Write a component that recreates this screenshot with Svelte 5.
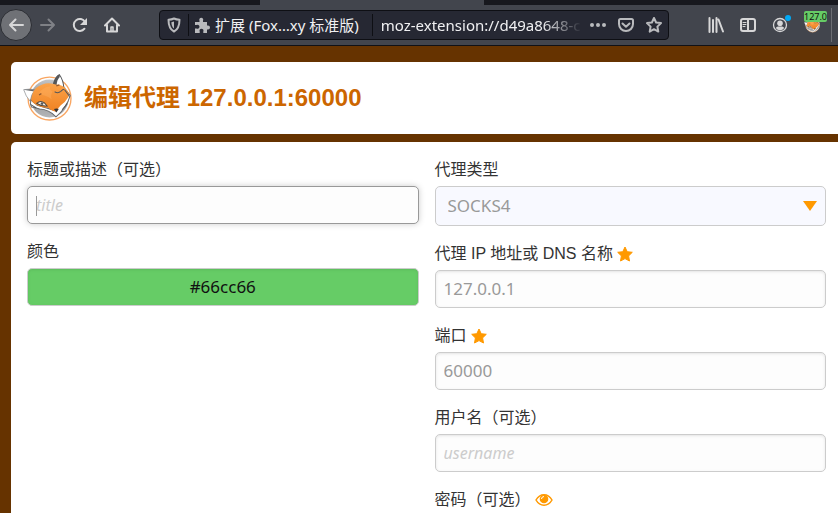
<script lang="ts">
  let title = $state('');
  let color = $state('#66cc66');
  let proxyType = $state('SOCKS4');
  let address = $state('127.0.0.1');
  let port = $state('60000');
  let username = $state('');
  let password = $state('');
  let showPassword = $state(false);
  let location = $state('moz-extension://d49a8648-c');
</script>

{#snippet fox()}
  <svg viewBox="0 0 144 141" aria-hidden="true">
    <defs>
      <linearGradient id="disc" x1="0" y1="0" x2="0" y2="1">
        <stop offset="0" stop-color="#c4c6c8" />
        <stop offset="0.45" stop-color="#929497" />
        <stop offset="1" stop-color="#b4b6b8" />
      </linearGradient>
      <linearGradient id="fur" x1="0" y1="0" x2="0" y2="1">
        <stop offset="0" stop-color="#fba34a" />
        <stop offset="1" stop-color="#f08222" />
      </linearGradient>
    </defs>
    <circle cx="78" cy="72" r="63" fill="#fff" stroke="#f9a662" stroke-width="4" />
    <circle cx="78" cy="72" r="56" fill="url(#disc)" />
    <path d="M2 46 Q20 43 35 46 Q24 60 21 80 Q8 66 2 46Z" fill="#fff" stroke="#85878a" stroke-width="2" />
    <path d="M2 46 Q20 43 35 46 L29 51 Q14 48 2 46Z" fill="#66686b" />
    <path d="M90 30 Q94 9 107 2 Q119 18 120 42Z" fill="#fff" stroke="#55575a" stroke-width="3" />
    <path d="M88 31 Q93 8 107 1 L108 9 Q99 18 99 33Z" fill="#55575a" />
    <path d="M23 76 Q20 88 25 97 Q35 98 49 103 Q76 104 97 126 Q128 100 139 63 L127 48 L96 108 L42 92Z" fill="#fff" stroke="#66686b" stroke-width="3" stroke-linejoin="round" />
    <path d="M37 42 Q57 27 76 27 Q88 28 96 31 Q117 31 128 46 Q137 55 134 67 Q124 84 111 92 Q103 99 99 111 Q82 108 75 99 Q56 101 41 91 Q29 87 24 77 Q26 55 37 42Z" fill="url(#fur)" />
    <path d="M45 60 Q57 38 80 37 Q76 46 87 52 Q79 64 85 75 Q66 60 45 60Z" fill="#ffb263" opacity="0.4" />
    <path d="M93 52 Q103 58 111 51 Q117 45 121 45" stroke="#55575a" stroke-width="3" fill="none" />
    <path d="M98 35 L107 32 M47 61 L54 58" stroke="#93592d" stroke-width="4" />
    <path d="M40 86 Q52 76 63 85 L71 94 Q55 96 40 86Z" fill="#f5f2ed" stroke="#51483e" stroke-width="3" />
    <circle cx="56" cy="87" r="4" fill="#55575a" />
    <path d="M91 103 Q99 99 105 103 L98 113Z" fill="#353536" />
    <path d="M122 46 L137 66 M23 90 L39 100 M115 105 L130 87" stroke="#55575a" stroke-width="3" />
  </svg>
{/snippet}

{#snippet star()}
  <svg class="required" viewBox="0 0 16 16" aria-hidden="true">
    <path d="M8 1 L10.2 5.7 L15.3 6.3 L11.6 9.9 L12.5 15 L8 12.6 L3.5 15 L4.4 9.9 L.7 6.3 L5.8 5.7Z" fill="#f90" stroke="#f90" stroke-linejoin="round" />
  </svg>
{/snippet}

<div class="window">
  <div class="tab-strip"><div class="active-tab"></div></div>

  <nav class="toolbar">
    <button class="tool back" aria-label="Back">
      <svg viewBox="0 0 16 16"><path d="M15 8H2 M7.5 2.5L2 8l5.5 5.5" /></svg>
    </button>
    <button class="tool" aria-label="Forward" disabled>
      <svg viewBox="0 0 16 16"><path d="M1 8h13 M8.5 2.5L14 8l-5.5 5.5" /></svg>
    </button>
    <button class="tool" aria-label="Reload">
      <svg viewBox="0 0 16 16">
        <path d="M12.5 11.7A6 6 0 1 1 13 5" />
        <path d="M15 1v7H8z" fill="currentColor" stroke="none" />
      </svg>
    </button>
    <button class="tool" aria-label="Home">
      <svg viewBox="0 0 16 16">
        <path d="M1 8.5L8 1.5l7 7 M3 8v6.5h10V8" />
        <path d="M7 14v-4h2v4" stroke-width="1.5" />
      </svg>
    </button>

    <div class="url-bar">
      <button class="url-icon" aria-label="Tracking protection">
        <svg viewBox="0 0 16 16">
          <path d="M8 1.5c2 1 4 1.2 5.5 1.2 0 5-.7 9.3-5.5 11.8C3.2 12 2.5 7.7 2.5 2.7 4 2.7 6 2.5 8 1.5Z" />
          <path d="M8 4.5v7C5.8 9.8 5.5 7.5 5.4 5.2Z" fill="currentColor" stroke="none" />
        </svg>
      </button>
      <button class="identity">
        <svg viewBox="0 0 16 16">
          <path d="M1 5h3.5V3.8A2 2 0 1 1 8 3.8V5h4v3.5h1A2 2 0 1 1 13 12.5H12V16H8.3v-1.5a2 2 0 1 0-3.6 0V16H0v-4.5h1.5a2 2 0 1 0 0-3.5H0V5z" fill="currentColor" stroke="none" />
        </svg>
        <span>扩展 (Fox…xy 标准版)</span>
      </button>
      <input class="location" aria-label="Address" bind:value={location} />
      <button class="url-icon" aria-label="Page actions">
        <svg viewBox="0 0 16 16">
          <g fill="currentColor" stroke="none">
            <circle cx="2" cy="8" r="2" /><circle cx="8" cy="8" r="2" /><circle cx="14" cy="8" r="2" />
          </g>
        </svg>
      </button>
      <button class="url-icon" aria-label="Save to Pocket">
        <svg viewBox="0 0 16 16">
          <path d="M2.5 2h11Q15 2 15 3.5V7A7 7 0 0 1 1 7V3.5Q1 2 2.5 2z M4.5 6.5L8 9.8l3.5-3.3" />
        </svg>
      </button>
      <button class="url-icon" aria-label="Bookmark">
        <svg viewBox="0 0 16 16">
          <path d="M8 1l2.1 4.5 4.9.6-3.6 3.5.9 5L8 12.2l-4.3 2.4.9-5L1 6.1l4.9-.6z" />
        </svg>
      </button>
    </div>

    <button class="tool" aria-label="Library">
      <svg viewBox="0 0 16 16"><path d="M1.5 1v14 M5 3v12 M8.5 1v14 M10.5 2.5L15 14.5" /></svg>
    </button>
    <button class="tool" aria-label="Sidebar">
      <svg viewBox="0 0 16 16">
        <rect x="1" y="2" width="14" height="12" rx="2" />
        <path d="M8 2v12" />
        <path d="M3 5.5h3 M3 7.5h3 M3 9.5h2" stroke-width="1" />
      </svg>
    </button>
    <button class="tool" aria-label="Account">
      <svg viewBox="0 0 16 16">
        <circle cx="8" cy="8" r="6.5" stroke-width="1.3" />
        <g fill="currentColor" stroke="none">
          <circle cx="8" cy="6.3" r="2.8" />
          <path d="M3.8 11Q4.5 9.5 6 9.5H10Q11.5 9.5 12.2 11A5 5 0 0 1 3.8 11z" />
        </g>
      </svg>
      <span class="dot"></span>
    </button>
    <button class="tool extension" aria-label="FoxyProxy">
      {@render fox()}
      <span class="badge">127.0</span>
    </button>
    <div class="divider"></div>
  </nav>

  <main>
    <header class="card heading">
      <div class="logo">{@render fox()}</div>
      <h1>编辑代理 127.0.0.1:60000</h1>
    </header>

    <form class="card columns">
      <div class="column">
        <div class="field">
          <label for="title">标题或描述（可选）</label>
          <div class="focused">
            <input id="title" type="text" placeholder="title" bind:value={title} />
          </div>
        </div>
        <div class="field">
          <label for="color">颜色</label>
          <input id="color" class="color" type="text" bind:value={color} style:background-color={color} />
        </div>
      </div>

      <div class="column">
        <div class="field">
          <label for="type">代理类型</label>
          <div class="select">
            <select id="type" bind:value={proxyType}>
              <option>SOCKS4</option>
            </select>
            <svg viewBox="0 0 14 10" aria-hidden="true"><path d="M0 0h14L7 10z" fill="#f90" /></svg>
          </div>
        </div>
        <div class="field">
          <label for="address">代理 IP 地址或 DNS 名称 {@render star()}</label>
          <input id="address" type="text" bind:value={address} />
        </div>
        <div class="field">
          <label for="port">端口 {@render star()}</label>
          <input id="port" type="text" bind:value={port} />
        </div>
        <div class="field">
          <label for="username">用户名（可选）</label>
          <input id="username" type="text" placeholder="username" bind:value={username} />
        </div>
        <div class="field">
          <div class="label-row">
            <label for="password">密码（可选）</label>
            <button type="button" class="eye" aria-label="Show password" onclick={() => (showPassword = !showPassword)}>
              <svg viewBox="0 0 18 14" aria-hidden="true">
                <path d="M1 7Q4 1.8 9 1.8T17 7Q14 12.2 9 12.2T1 7z" fill="none" stroke="#f90" stroke-width="1.5" />
                <circle cx="9" cy="6" r="4.3" fill="#f90" />
                <path d="M6.5 6Q6.5 3.7 9 3.5" fill="none" stroke="#fff" />
              </svg>
            </button>
          </div>
          <input id="password" type={showPassword ? 'text' : 'password'} bind:value={password} />
        </div>
      </div>
    </form>
  </main>
</div>

<style>
  :global(body) {
    margin: 0;
    background: #630;
  }

  * {
    box-sizing: border-box;
  }

  .window {
    height: 100vh;
    overflow: hidden;
    background: #630;
    color: #333;
    font-family: 'Liberation Sans', 'Noto Sans CJK SC', sans-serif;
    font-size: 16px;
  }

  button {
    padding: 0;
    border: none;
    background: none;
    color: inherit;
    font: inherit;
  }

  svg {
    display: block;
  }

  .tab-strip {
    display: flex;
    justify-content: center;
    height: 5px;
    padding-right: 94px;
    background: #17181e;
  }

  .active-tab {
    width: 224px;
    background: #42454d;
  }

  .toolbar {
    display: flex;
    align-items: center;
    height: 41px;
    padding-right: 6px;
    border-bottom: 1px solid #101116;
    background: #42454d;
    color: #d7d7d8;
    font-family: 'Noto Sans', 'Noto Sans CJK SC', sans-serif;
    font-size: 15px;
  }

  .toolbar svg {
    width: 16px;
    height: 16px;
    fill: none;
    stroke: currentColor;
    stroke-width: 2;
    stroke-linecap: round;
    stroke-linejoin: round;
  }

  .toolbar .extension svg {
    stroke: none;
  }

  .tool {
    position: relative;
    display: flex;
    flex: none;
    align-items: center;
    justify-content: center;
    width: 32px;
    height: 32px;
  }

  .tool:disabled {
    color: #7f8186;
  }

  .back {
    border: 1px solid #2b2d33;
    border-radius: 50%;
    background: #6f7176;
  }

  .url-bar {
    display: flex;
    flex: 1;
    align-items: center;
    gap: 12px;
    min-width: 0;
    height: 30px;
    margin: 0 31px;
    padding: 0 6px;
    border: 1px solid #0e0f14;
    border-radius: 4px;
    background: #262833;
  }

  .url-icon {
    color: #b9babd;
  }

  .identity {
    display: flex;
    flex: none;
    gap: 4px;
    align-items: center;
    height: 22px;
    margin-left: -6px;
    padding: 0 13px 0 6px;
    border: solid #0e0f14;
    border-width: 0 1px;
    color: #f0f0f2;
    line-height: 22px;
    white-space: nowrap;
  }

  .identity svg {
    color: #b9babd;
  }

  .location {
    flex: 1;
    min-width: 0;
    margin: 0 -4px;
    padding: 0;
    border: none;
    outline: none;
    background: none;
    color: #f0f0f2;
    font: inherit;
    mask-image: linear-gradient(to left, transparent, #000 40px);
  }

  .dot {
    position: absolute;
    top: 6px;
    right: 5px;
    width: 6px;
    height: 6px;
    border-radius: 50%;
    background: #00a8f5;
  }

  .badge {
    position: absolute;
    top: 2px;
    left: 8px;
    border-radius: 2px;
    background: #6c6;
    color: #111;
    font-size: 9px;
    line-height: 11px;
  }

  .divider {
    width: 1px;
    height: 34px;
    margin-left: 3px;
    background: #6c6e74;
  }

  main {
    display: flex;
    flex-direction: column;
    gap: 8px;
    padding: 16px 0 0 11px;
  }

  .card {
    border-radius: 5px 0 0 5px;
    background: #fff;
  }

  .heading {
    display: flex;
    align-items: center;
    gap: 12px;
    padding: 12px;
  }

  .logo svg {
    width: 49px;
    height: 48px;
  }

  h1 {
    margin: 0;
    color: #c60;
    font-size: 24px;
    font-weight: bold;
    line-height: 48px;
  }

  .columns {
    display: grid;
    grid-template-columns: 1fr 1fr;
    gap: 16px;
    padding: 16px 12px 16px 16px;
  }

  .column {
    display: flex;
    flex-direction: column;
    gap: 16px;
  }

  .field {
    display: flex;
    flex-direction: column;
    gap: 4px;
  }

  label {
    display: flex;
    align-items: center;
    gap: 4px;
    height: 24px;
    line-height: 24px;
  }

  .label-row {
    display: flex;
    gap: 4px;
  }

  .required {
    width: 16px;
    height: 16px;
  }

  .eye svg {
    width: 18px;
    height: 14px;
  }

  .field input,
  select {
    width: 100%;
    height: 38px;
    padding: 0 8px 2px;
    border: 1px solid #ccc;
    border-radius: 5px;
    outline: none;
    background: #fdfdfd;
    box-shadow: inset 0 1px 3px #e4e4e4;
    color: #999;
    font-family: 'Noto Sans', 'Noto Sans CJK SC', sans-serif;
    font-size: 17px;
  }

  .field input::placeholder {
    color: #ccc;
    font-size: 16px;
    font-style: italic;
    opacity: 1;
  }

  .focused {
    position: relative;
    display: flex;
  }

  .focused::before {
    content: '';
    position: absolute;
    top: 10px;
    left: 9px;
    width: 1px;
    height: 20px;
    background: #999;
  }

  .focused input {
    border-color: #999;
    box-shadow: 0 0 6px #ccc;
  }

  .field .color {
    box-shadow: inset 0 1px 3px #5cbb5c;
    color: #111;
    text-align: center;
  }

  .select {
    position: relative;
  }

  select {
    display: block;
    height: 40px;
    padding: 0 12px 2px;
    appearance: none;
    background: #f8f9ff;
    box-shadow: none;
  }

  .select svg {
    position: absolute;
    top: 15px;
    right: 9px;
    width: 14px;
    height: 10px;
    pointer-events: none;
  }
</style>
